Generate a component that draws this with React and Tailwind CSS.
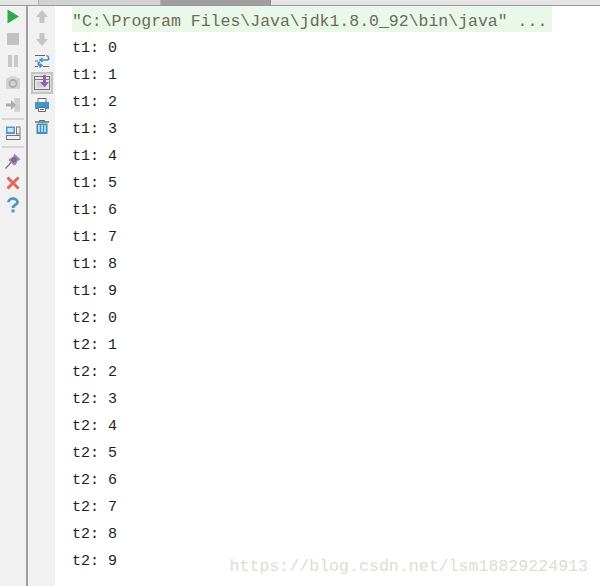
import React from "react";

const Rail = ({ children, className = "" }) => (
  <div className={`flex flex-col items-center ${className}`}>{children}</div>
);

const Slot = ({ children, active }) => (
  <div
    className={`flex h-[22px] w-[22px] shrink-0 items-center justify-center ${
      active ? "border-2 border-[#c4c4c4] bg-[#e2e2e2]" : ""
    }`}
  >
    {children}
  </div>
);

const Icon = ({ children }) => (
  <svg width="16" height="16" viewBox="0 0 16 16">
    {children}
  </svg>
);

const Divider = () => <div className="my-[2px] h-[2px] w-[22px] bg-[#d6d6d6]" />;

const lines = [
  ...Array.from({ length: 10 }, (_, i) => `t1: ${i}`),
  ...Array.from({ length: 10 }, (_, i) => `t2: ${i}`),
];

const App = () => (
  <div className="relative flex h-[586px] w-[600px] flex-col overflow-hidden bg-white">
    <div className="flex h-[6px] shrink-0 border-b border-[#999999] bg-[#e4e4e4]">
      <div className="ml-[38px] h-full w-[123px] border-x border-[#b0b0b0] bg-[#d2d2d2]" />
      <div className="h-full w-[110px] border-r border-[#8a8a8a] bg-[#9f9f9f]" />
    </div>

    <div className="flex min-h-0 flex-1">
      <Rail className="w-[28px] shrink-0 border-r-2 border-[#a0a0a0] bg-[#f1f1f1]">
        <Slot>
          <Icon>
            <path d="M2.5 0.5 14 7.5 2.5 14.5Z" fill="#2fa84f" />
          </Icon>
        </Slot>
        <Slot>
          <Icon>
            <rect x="2" y="2" width="12" height="12" fill="#c2c2c2" />
          </Icon>
        </Slot>
        <Slot>
          <Icon>
            <path d="M3 2h4v12H3zM9 2h4v12H9z" fill="#c8c8c8" />
          </Icon>
        </Slot>
        <Slot>
          <Icon>
            <path d="M1 3h3l1-1.5h6L12 3h3v11H1z" fill="#d2d2d2" />
            <circle cx="8" cy="8.5" r="3.6" fill="none" stroke="#a8a8a8" strokeWidth="1.6" />
          </Icon>
        </Slot>
        <Slot>
          <Icon>
            <path d="M9 1h6v14H9z" fill="#dadada" />
            <path d="M10 1.5 15 1v14l-5-1z" fill="#cfcfcf" />
            <path d="M1 6.5h5V3l5 5-5 5V9.5H1z" fill="#adadad" />
          </Icon>
        </Slot>
        <Divider />
        <Slot>
          <Icon>
            <rect x="1" y="1.5" width="9" height="7.5" fill="#4f9bcf" />
            <rect x="2.5" y="3" width="6" height="4" fill="#cfe3f2" />
            <rect x="11.5" y="2" width="3.5" height="7" fill="none" stroke="#777" />
            <rect x="1.5" y="10.5" width="13.5" height="4" fill="none" stroke="#777" />
          </Icon>
        </Slot>
        <Divider />
        <Slot>
          <Icon>
            <path d="M0.5 15.5 6 9.5" stroke="#777" strokeWidth="1.2" />
            <path d="M9.5 0.5 15.5 6.5l-3 1.5-1.5 3.5L9 12.5 3.5 7 5 5.5 8 4z" fill="#a77cc0" />
            <circle cx="9" cy="6.8" r="2.7" fill="#6f7478" />
          </Icon>
        </Slot>
        <Slot>
          <Icon>
            <path d="M2.5 2.5 13.5 13.5M13.5 2.5 2.5 13.5" stroke="#e0675c" strokeWidth="3" />
          </Icon>
        </Slot>
        <Slot>
          <Icon>
            <path d="M3.5 5.2C3.5 0.5 12.5 0.5 12.5 5.2 12.5 8 8 7.5 8 11" fill="none" stroke="#4b97c6" strokeWidth="2.8" />
            <rect x="6.5" y="12.4" width="3" height="3" fill="#4b97c6" />
          </Icon>
        </Slot>
      </Rail>

      <Rail className="w-[27px] shrink-0 bg-[#f1f1f1]">
        <Slot>
          <Icon>
            <path d="M8 1 14 8H10.5v6h-5V8H2z" fill="#c4c4c4" />
          </Icon>
        </Slot>
        <Slot>
          <Icon>
            <path d="M8 15 14 8H10.5V2h-5v6H2z" fill="#c4c4c4" />
          </Icon>
        </Slot>
        <Slot>
          <Icon>
            <path d="M1 2.5h10M1 8h3M1 13.5h3M9 13.5h6" stroke="#666" strokeWidth="1.2" />
            <path d="M12.5 2.5c3 1 3 4.500 0 4.500H7" fill="none" stroke="#3d8ec9" strokeWidth="1.5" />
            <path d="M8.500 5 6 7l2.500 2" fill="none" stroke="#3d8ec9" strokeWidth="1.500" />
            <path d="M6 9c-2.500 0-2.500 3.500 0 3.500h1M5.500 10.500 8 12.500 5.500 14.500" fill="none" stroke="#3d8ec9" strokeWidth="1.500" />
          </Icon>
        </Slot>
        <Slot active>
          <Icon>
            <rect x="0.5" y="1.5" width="15" height="13" fill="#e8e8e8" stroke="#777" />
            <path d="M0.5 4.5h15" stroke="#777" />
            <rect x="2.5" y="6.5" width="6" height="6" fill="#d0d0d0" />
            <path d="M9 0h3v7h3l-4.5 5.5L6 7h3z" fill="#9160b8" />
          </Icon>
        </Slot>
        <Slot>
          <Icon>
            <path d="M4 1.5h8v4H4z" fill="#fff" stroke="#666" />
            <path d="M1 5h14v7h-3v-2H4v2H1z" fill="#3f97cf" />
            <path d="M4.5 10.5h7v4h-7z" fill="#fff" stroke="#666" />
            <path d="M6 12.5h4" stroke="#666" />
          </Icon>
        </Slot>
        <Slot>
          <Icon>
            <path d="M1 3h14" stroke="#666" strokeWidth="1.4" />
            <path d="M5.5 3V1.5h5V3" fill="none" stroke="#666" />
            <path d="M2.5 4.5h11V15h-11z" fill="#3f8fc2" />
            <path d="M5 6v7M8 6v7M11 6v7" stroke="#fff" strokeWidth="1.2" />
          </Icon>
        </Slot>
      </Rail>

      <div className="min-w-0 flex-1 pl-[17px] font-['Liberation_Mono',monospace] text-[15px] leading-[27px] text-[#1e1e1e]">
        <div className="mb-[3px] h-[26px] w-[480px] whitespace-pre bg-[#e9f8e9] pt-[2px] text-[16.5px] leading-[27px] text-[#6e6a5c]">
          {'"C:\\Program Files\\Java\\jdk1.8.0_92\\bin\\java" ...'}
        </div>
        {lines.map((line) => (
          <div key={line} className="h-[27px] whitespace-pre">
            {line}
          </div>
        ))}
      </div>
    </div>

    {/* csdn watermark */}
    <div className="absolute bottom-[9px] right-[12px] font-['Liberation_Mono',monospace] text-[16.6px] leading-5 text-[#dddcd6]">
      https://blog.csdn.net/lsm18829224913
    </div>
  </div>
);

export default App;
